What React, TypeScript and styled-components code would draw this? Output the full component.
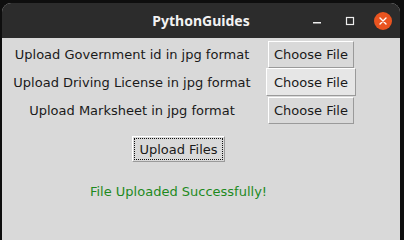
import styled, { createGlobalStyle } from 'styled-components';

const GlobalStyle = createGlobalStyle`
  html, body {
    margin: 0;
    padding: 0;
    background: #0e0e0e;
  }
`;

const Screen = styled.div`
  width: 404px;
  height: 240px;
  padding: 3px 4px 0 2px;
  box-sizing: border-box;
  background: #0e0e0e;
  overflow: hidden;
`;

const Window = styled.div`
  height: 100%;
  display: flex;
  flex-direction: column;
  background: #d9d9d9;
  border-radius: 9px 9px 0 0;
  overflow: hidden;
`;

const TitleBar = styled.div`
  height: 35px;
  flex: none;
  position: relative;
  display: flex;
  align-items: center;
  justify-content: center;
  background: #2c2c2c;
  color: #f2f2f2;
  font-family: 'Noto Sans', 'DejaVu Sans', sans-serif;
  font-weight: 700;
  font-size: 14px;
`;

const Controls = styled.div`
  position: absolute;
  right: 8px;
  top: 0;
  height: 100%;
  display: flex;
  align-items: center;
  gap: 15px;
`;

const Control = styled.div`
  width: 18px;
  height: 18px;
  display: flex;
  align-items: center;
  justify-content: center;
`;

const CloseCircle = styled(Control)`
  border-radius: 50%;
  background: #e95420;
`;

const Content = styled.div`
  flex: 1;
  font-family: 'DejaVu Sans', sans-serif;
  font-size: 13px;
  color: #1a1a1a;
`;

const Form = styled.div`
  display: grid;
  grid-template-columns: 248px auto;
  grid-auto-rows: 28px;
  padding: 2px 0 0 6px;
`;

const Label = styled.div`
  display: flex;
  align-items: center;
  justify-content: center;
`;

const Cell = styled.div`
  display: flex;
  align-items: center;
  padding-left: 12px;
`;

const TkButton = styled.div<{ $active?: boolean }>`
  box-sizing: border-box;
  height: ${({ $active }) => ($active ? '28px' : '27px')};
  margin-left: ${({ $active }) => ($active ? '-2px' : '0')};
  padding: 0 ${({ $active }) => ($active ? '7px' : '5px')};
  display: flex;
  align-items: center;
  background: ${({ $active }) => ($active ? '#e6e6e6' : '#d9d9d9')};
  border-style: solid;
  border-width: 1px;
  border-color: #ffffff #9a9a9a #9a9a9a #ffffff;
  white-space: nowrap;
`;

const Bottom = styled.div`
  width: 353px;
  display: flex;
  flex-direction: column;
  align-items: center;
  padding-top: 12px;
`;

const UploadButton = styled.div`
  box-sizing: border-box;
  height: 26px;
  padding: 1px;
  background: #d9d9d9;
  border-style: solid;
  border-width: 1px;
  border-color: #ffffff #9a9a9a #9a9a9a #ffffff;
`;

const FocusRing = styled.div`
  height: 100%;
  box-sizing: border-box;
  padding: 0 4px;
  display: flex;
  align-items: center;
  border: 1px dotted #111;
`;

const Status = styled.div`
  margin-top: 22px;
  color: #1e8a1e;
`;

const rows = [
  'Upload Government id in jpg format',
  'Upload Driving License in jpg format',
  'Upload Marksheet in jpg format',
];

const App: React.FC = () => {
  return (
    <Screen>
      <GlobalStyle />
      <Window>
        <TitleBar>
          PythonGuides
          <Controls>
            <Control>
              <svg width="12" height="12" viewBox="0 0 12 12">
                <rect x="2" y="7" width="8" height="1.5" fill="#eee" />
              </svg>
            </Control>
            <Control>
              <svg width="12" height="12" viewBox="0 0 12 12">
                <rect x="2.5" y="2.5" width="7" height="7" fill="none" stroke="#eee" strokeWidth="1.2" />
              </svg>
            </Control>
            <CloseCircle>
              <svg width="10" height="10" viewBox="0 0 10 10">
                <path d="M2 2 L8 8 M8 2 L2 8" stroke="#fff" strokeWidth="1.4" strokeLinecap="round" />
              </svg>
            </CloseCircle>
          </Controls>
        </TitleBar>
        <Content>
          <Form>
            {rows.map((text, i) => (
              <>
                <Label key={`l${i}`}>{text}</Label>
                <Cell key={`b${i}`}>
                  <TkButton $active={i === 1}>Choose File</TkButton>
                </Cell>
              </>
            ))}
          </Form>
          <Bottom>
            <UploadButton>
              <FocusRing>Upload Files</FocusRing>
            </UploadButton>
            <Status>File Uploaded Successfully!</Status>
          </Bottom>
        </Content>
      </Window>
    </Screen>
  );
};

export default App;
